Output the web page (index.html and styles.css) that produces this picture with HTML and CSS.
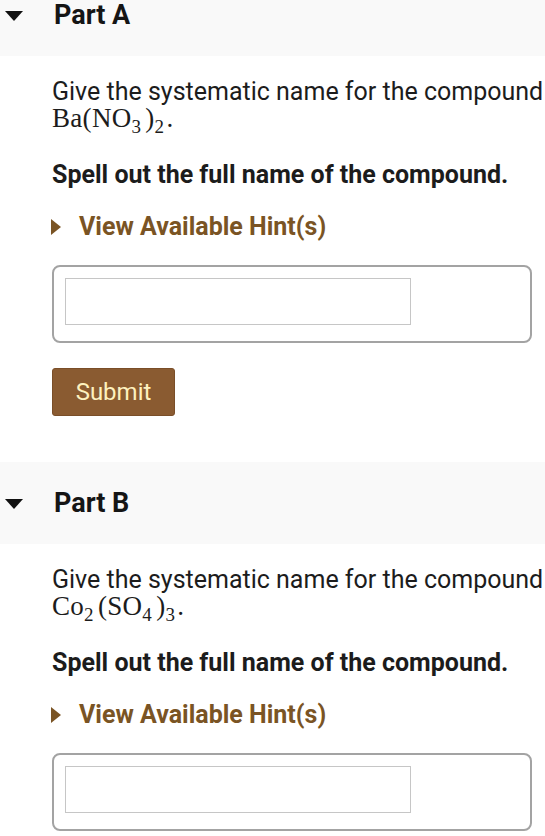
FILE: index.html
```html
<!DOCTYPE html>
<html>
<head>
<meta charset="utf-8">
<link rel="stylesheet" href="styles.css">
</head>
<body>
<div class="page">
  <section class="part">
    <div class="part-head">
      <svg class="caret-down" width="18" height="10" viewBox="0 0 18 10"><path d="M0 0H18L9 10Z" fill="#111"/></svg>
      <h2 class="part-title">Part A</h2>
    </div>
    <div class="part-body">
      <p class="question">Give the systematic name for the compound<br><span class="formula">Ba(NO<sub>3</sub><span class="gap"></span>)<sub>2</sub><span class="dot">.</span></span></p>
      <p class="instr">Spell out the full name of the compound.</p>
      <div class="hint"><svg class="caret-right" width="10" height="16" viewBox="0 0 10 16"><path d="M0 0L10 8L0 16Z" fill="#7a5424"/></svg><span>View Available Hint(s)</span></div>
      <div class="answer-box"><div class="answer-input"></div></div>
      <button class="submit">Submit</button>
    </div>
  </section>
  <section class="part">
    <div class="part-head">
      <svg class="caret-down" width="18" height="10" viewBox="0 0 18 10"><path d="M0 0H18L9 10Z" fill="#111"/></svg>
      <h2 class="part-title">Part B</h2>
    </div>
    <div class="part-body">
      <p class="question">Give the systematic name for the compound<br><span class="formula">Co<sub>2</sub><span class="gap"></span>(SO<sub>4</sub><span class="gap"></span>)<sub>3</sub><span class="dot">.</span></span></p>
      <p class="instr">Spell out the full name of the compound.</p>
      <div class="hint"><svg class="caret-right" width="10" height="16" viewBox="0 0 10 16"><path d="M0 0L10 8L0 16Z" fill="#7a5424"/></svg><span>View Available Hint(s)</span></div>
      <div class="answer-box"><div class="answer-input"></div></div>
    </div>
  </section>
</div>
</body>
</html>
```
FILE: styles.css
```css
html, body {
  margin: 0;
  padding: 0;
  background: #fff;
}
body {
  font-family: Roboto, "Liberation Sans", sans-serif;
  color: #1c1c1c;
  overflow: hidden;
}
.page {
  margin-top: -26px;
}
.part-head {
  height: 82px;
  background: #f9f9f9;
  display: flex;
  align-items: center;
}
.caret-down {
  margin-left: 5px;
  width: 18px;
  margin-top: 1px;
}
.part-title {
  margin: 0 0 0 31px;
  font-size: 27px;
  font-weight: 700;
  line-height: 32px;
  color: #151515;
}
.part-body {
  padding: 22px 0 46px 52px;
}
.question {
  margin: 0;
  font-size: 25px;
  line-height: 27px;
}
.formula {
  font-family: "Liberation Serif", "DejaVu Serif", serif;
  font-size: 27px;
  letter-spacing: 0.3px;
}
.formula sub {
  font-size: 19px;
  vertical-align: -6px;
  line-height: 0;
}
.formula .gap {
  display: inline-block;
  width: 4px;
}
.formula .dot {
  margin-left: 2px;
}
.instr {
  margin: 29px 0 0;
  font-size: 25px;
  line-height: 28px;
  font-weight: 700;
}
.hint {
  margin-top: 24px;
  display: flex;
  align-items: center;
  font-size: 25px;
  line-height: 28px;
  font-weight: 700;
  color: #7a5424;
}
.caret-right {
  margin: 0 18px 0 -1px;
}
.answer-box {
  margin-top: 24px;
  margin-right: 13px;
  height: 74px;
  box-sizing: content-box;
  border: 2px solid #a3a3a3;
  border-radius: 8px;
  padding: 0 11px;
  display: flex;
  align-items: flex-start;
}
.answer-input {
  margin-top: 11px;
  width: 344px;
  height: 45px;
  border: 1px solid #c6c6c6;
  background: #fff;
}
.submit {
  display: block;
  margin-top: 25px;
  width: 123px;
  height: 48px;
  background: #8a5b31;
  border: 1px solid #7a4e28;
  border-radius: 3px;
  color: #fdf1bf;
  font-family: Roboto, "Liberation Sans", sans-serif;
  font-size: 24px;
  padding: 0;
}
```
